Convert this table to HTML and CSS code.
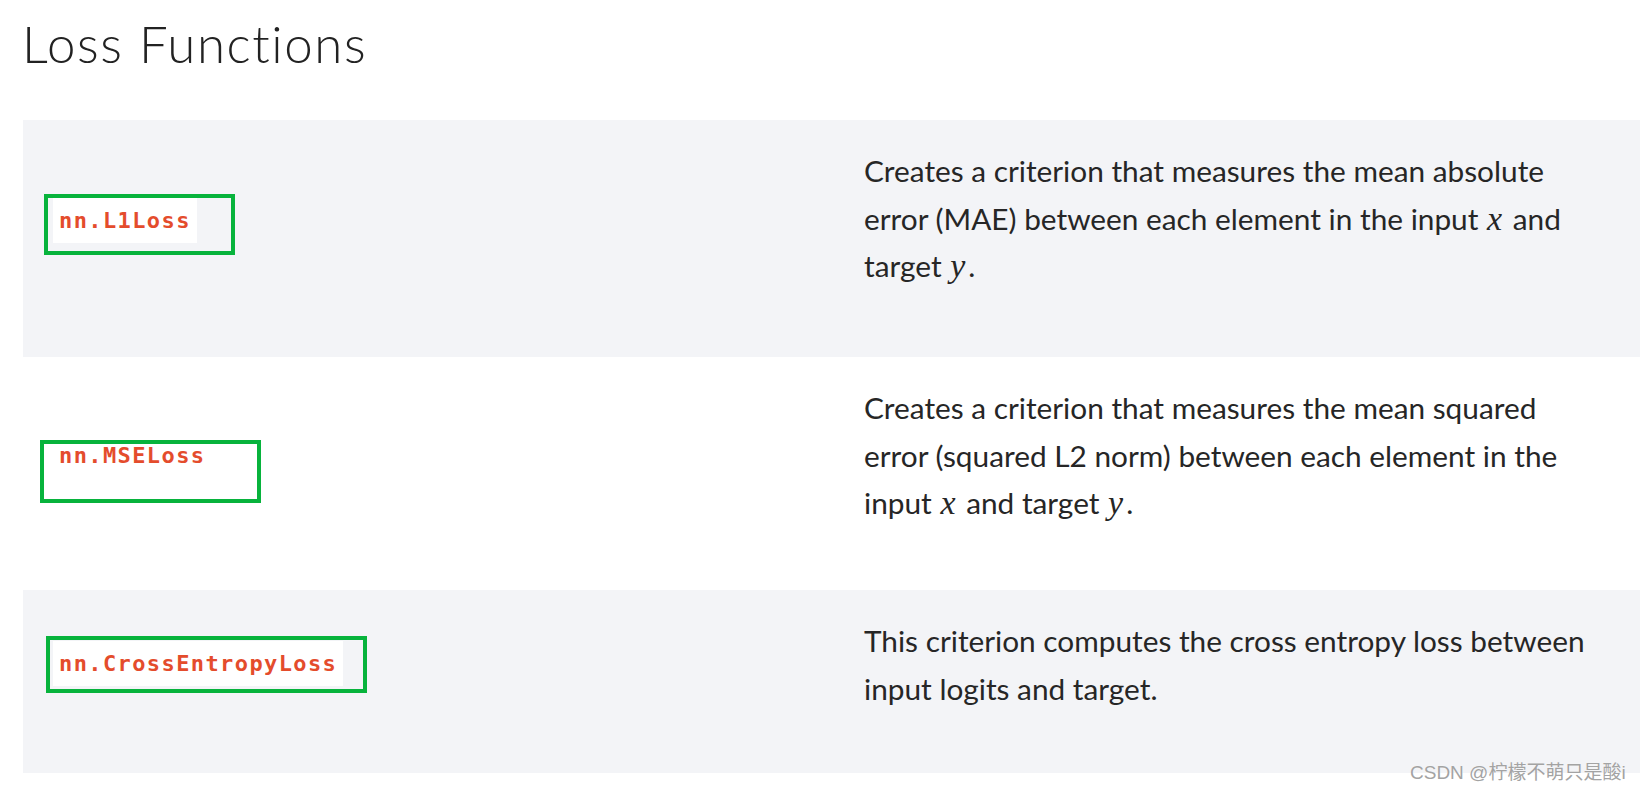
FILE: index.html
```html
<!DOCTYPE html>
<html lang="en">
<head>
<meta charset="utf-8">
<title>Loss Functions</title>
<link rel="stylesheet" href="styles.css">
</head>
<body>
<main class="page">
  <h1 class="title">Loss Functions</h1>
  <div class="table">
    <div class="row row-a row-shaded">
      <div class="cell-name">
        <code class="code">nn.L1Loss</code>
        <span class="mark mark-1"></span>
      </div>
      <div class="cell-desc">
        <p class="desc">Creates a criterion that measures the mean absolute error (MAE) between each element in the input <span class="math">x</span> and target <span class="math">y</span>.</p>
      </div>
    </div>
    <div class="row row-b">
      <div class="cell-name">
        <code class="code">nn.MSELoss</code>
        <span class="mark mark-2"></span>
      </div>
      <div class="cell-desc">
        <p class="desc">Creates a criterion that measures the mean squared error (squared L2 norm) between each element in the input <span class="math">x</span> and target <span class="math">y</span>.</p>
      </div>
    </div>
    <div class="row row-c row-shaded">
      <div class="cell-name">
        <code class="code">nn.CrossEntropyLoss</code>
        <span class="mark mark-3"></span>
      </div>
      <div class="cell-desc">
        <p class="desc">This criterion computes the cross entropy loss between input logits and target.</p>
      </div>
    </div>
  </div>
  <div class="watermark">CSDN @柠檬不萌只是酸i</div>
</main>
</body>
</html>
```

FILE: styles.css
```css
html, body {
  margin: 0;
  padding: 0;
  background: #ffffff;
}

body {
  width: 1640px;
  height: 794px;
  overflow: hidden;
  font-family: "Lato", "Open Sans", "Liberation Sans", sans-serif;
  color: #262626;
}

.page {
  position: relative;
  height: 794px;
}

.title {
  margin: 0;
  padding: 14px 0 0 22px;
  font-family: "Lato", "Open Sans", sans-serif;
  font-weight: 300;
  font-size: 51px;
  line-height: 60px;
  letter-spacing: 1.6px;
  color: #222222;
}

.table {
  margin: 46px 0 0 23px;
}

.row {
  display: grid;
  grid-template-columns: 841px 1fr;
}

.row-shaded {
  background: #f3f4f7;
}

.row-a { height: 237px; }
.row-b { height: 233px; }
.row-c { height: 183px; }

.cell-name {
  position: relative;
  display: flex;
  align-items: center;
  padding: 0 0 36px 30px;
}

.code {
  display: block;
  height: 45px;
  line-height: 45px;
  padding: 0 6px;
  background: #ffffff;
  font-family: "DejaVu Sans Mono", "Liberation Mono", monospace;
  font-size: 22px;
  font-weight: 700;
  letter-spacing: 1.4px;
  color: #e44c2c;
}

.cell-desc {
  padding: 27px 40px 0 0;
}

.desc {
  margin: 0;
  font-size: 29.8px;
  line-height: 47.5px;
  color: #262626;
}

.math {
  display: inline-block;
  padding: 0 3px 0 1px;
  font-family: "Liberation Serif", "DejaVu Serif", serif;
  font-style: italic;
  font-size: 34px;
  line-height: 1;
}

.mark {
  position: absolute;
  box-sizing: border-box;
  border: 4px solid #07b33c;
}

.mark-1 { left: 21px; top: 74px; width: 191px; height: 61px; }
.mark-2 { left: 17px; top: 83px; width: 221px; height: 63px; }
.mark-3 { left: 23px; top: 46px; width: 321px; height: 57px; }

.watermark {
  position: absolute;
  left: 1410px;
  top: 761px;
  font-family: "Liberation Sans", "Noto Sans CJK SC", sans-serif;
  font-size: 19px;
  line-height: 24px;
  color: #a3a3a3;
  text-shadow: 0 0 1px #ffffff;
  white-space: nowrap;
}
```
